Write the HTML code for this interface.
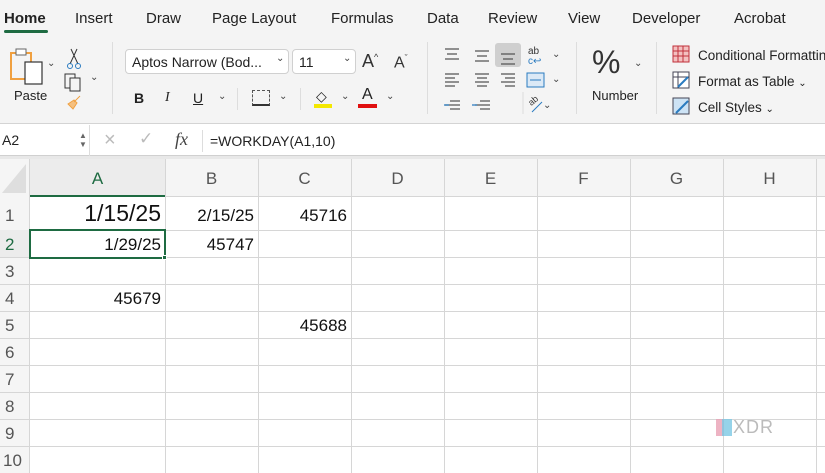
<!DOCTYPE html>
<html><head><meta charset="utf-8"><style>
*{margin:0;padding:0;box-sizing:border-box}
body{width:825px;height:473px;overflow:hidden;background:#fff;font-family:"Liberation Sans",sans-serif;color:#222;position:relative}
.a{position:absolute}
.tab{position:absolute;top:10px;font-size:15px;color:#222}
.t{position:absolute;font-size:13px;color:#222;white-space:nowrap}
.chev{position:absolute;font-size:10px;color:#444}
.rn{position:absolute;left:0;width:30px;font-size:17px;color:#555;padding-left:5px}
.ch{position:absolute;top:160px;height:37px;line-height:37px;text-align:center;font-size:17px;color:#555}
.cell{position:absolute;font-size:17px;color:#111;text-align:right}
</style></head><body>
<div class="a" style="left:0;top:0;width:825px;height:124px;background:#f4f4f4;border-bottom:1px solid #d4d4d4"></div>
<div class="tab" style="left:4px;font-weight:bold">Home</div>
<div class="a" style="left:4px;top:30px;width:44px;height:3px;background:#1e6b42;border-radius:2px"></div>
<div class="tab" style="left:75px">Insert</div>
<div class="tab" style="left:146px">Draw</div>
<div class="tab" style="left:212px">Page Layout</div>
<div class="tab" style="left:331px">Formulas</div>
<div class="tab" style="left:427px">Data</div>
<div class="tab" style="left:488px">Review</div>
<div class="tab" style="left:568px">View</div>
<div class="tab" style="left:632px">Developer</div>
<div class="tab" style="left:734px">Acrobat</div>

<svg class="a" style="left:8px;top:46px" width="110" height="70">
<rect x="3" y="7" width="20" height="26" fill="none" stroke="#f0a040" stroke-width="2"/>
<rect x="8" y="3" width="10" height="6" fill="#fff" stroke="#666"/>
<rect x="17" y="16" width="17" height="22" fill="#fff" stroke="#333" stroke-width="1.2"/>
<path d="M63 3 L70 18 M69 3 L62 18" stroke="#333" fill="none"/>
<circle cx="62" cy="20" r="2.5" stroke="#2a7bc0" fill="none"/><circle cx="70" cy="20" r="2.5" stroke="#2a7bc0" fill="none"/>
<rect x="57" y="28" width="10" height="14" fill="none" stroke="#333"/><rect x="62" y="32" width="10" height="13" fill="#f4f4f4" stroke="#333"/>
<path d="M72 50 l-6 6 M60 58 l6 -4 l3 3 l-4 6 z" stroke="#f0a040" fill="#f5c080"/>
</svg>
<div class="chev" style="left:47px;top:58px">⌄</div>
<div class="chev" style="left:90px;top:72px">⌄</div>
<div class="t" style="left:14px;top:88px">Paste</div>
<div class="a" style="left:112px;top:42px;width:1px;height:72px;background:#ddd"></div>

<div class="a" style="left:125px;top:49px;width:164px;height:25px;background:#fff;border:1px solid #d0d0d0;border-radius:4px"></div>
<div class="t" style="left:132px;top:54px;font-size:14px">Aptos Narrow (Bod...</div>
<div class="chev" style="left:276px;top:53px">⌄</div>
<div class="a" style="left:292px;top:49px;width:64px;height:25px;background:#fff;border:1px solid #d0d0d0;border-radius:4px"></div>
<div class="t" style="left:299px;top:54px;font-size:14px">11</div>
<div class="chev" style="left:343px;top:53px">⌄</div>
<div class="t" style="left:362px;top:51px;font-size:18px;color:#333">A<sup style="font-size:9px">^</sup></div>
<div class="t" style="left:394px;top:53px;font-size:16px;color:#333">A<sup style="font-size:9px">ˇ</sup></div>
<div class="t" style="left:134px;top:90px;font-weight:bold;font-size:14px">B</div>
<div class="t" style="left:165px;top:90px;font-style:italic;font-size:14px;font-family:'Liberation Serif'">I</div>
<div class="t" style="left:193px;top:90px;text-decoration:underline;font-size:14px">U</div>
<div class="chev" style="left:218px;top:91px">⌄</div>
<div class="a" style="left:237px;top:88px;width:1px;height:22px;background:#ddd"></div>
<div class="a" style="left:252px;top:90px;width:18px;height:16px;border:1px dashed #555;border-bottom:2px solid #333"></div>
<div class="chev" style="left:279px;top:91px">⌄</div>
<div class="a" style="left:300px;top:88px;width:1px;height:22px;background:#ddd"></div>
<div class="t" style="left:316px;top:88px;font-size:14px">◇</div>
<div class="a" style="left:314px;top:104px;width:18px;height:4px;background:#f4e800"></div>
<div class="chev" style="left:341px;top:91px">⌄</div>
<div class="t" style="left:362px;top:86px;font-size:16px">A</div>
<div class="a" style="left:358px;top:104px;width:19px;height:4px;background:#e01010"></div>
<div class="chev" style="left:386px;top:91px">⌄</div>
<div class="a" style="left:427px;top:42px;width:1px;height:72px;background:#ddd"></div>

<svg class="a" style="left:440px;top:42px" width="130" height="76">
<rect x="55" y="1" width="26" height="24" rx="3" fill="#cfcfcf"/>
<g stroke="#555" stroke-width="1.3">
<path d="M5 7h14M7 12h10M5 17h14"/><path d="M35 9h14M37 14h10M35 19h14"/><path d="M61 12h14M63 17h10M61 22h14"/>
<path d="M5 32h14M5 36h10M5 40h14M5 44h10"/><path d="M35 32h14M37 36h10M35 40h14M37 44h10"/><path d="M61 32h14M65 36h10M61 40h14M65 44h10"/>
<path d="M10 59h10M5 63h15M10 67h10"/><path d="M40 59h10M35 63h15M40 67h10"/>
</g>
<path d="M4 63h5M32 63h5" stroke="#2a7bc0" stroke-width="1.3"/>
<rect x="87" y="31" width="17" height="14" fill="#dbe9f6" stroke="#2a7bc0"/>
<path d="M90 38h11" stroke="#2a7bc0"/>
<path d="M83 50v22" stroke="#ddd"/>
<path d="M92 70 l10 -10" stroke="#2a7bc0"/>
<text x="88" y="12" font-size="10" fill="#333" font-family="Liberation Sans">ab</text><text x="88" y="22" font-size="10" fill="#2a7bc0" font-family="Liberation Sans">c↩</text>
<text x="89" y="62" font-size="9" fill="#333" font-family="Liberation Sans" transform="rotate(-40 93 60)">ab</text>
</svg>
<div class="chev" style="left:552px;top:49px">⌄</div>
<div class="chev" style="left:552px;top:74px">⌄</div>
<div class="chev" style="left:543px;top:100px">⌄</div>
<div class="a" style="left:576px;top:42px;width:1px;height:72px;background:#ddd"></div>
<div class="t" style="left:592px;top:44px;font-size:32px;color:#333;font-weight:300">%</div>
<div class="chev" style="left:634px;top:58px">⌄</div>
<div class="t" style="left:592px;top:88px">Number</div>
<div class="a" style="left:656px;top:42px;width:1px;height:72px;background:#ddd"></div>
<svg class="a" style="left:672px;top:45px" width="20" height="72">
<rect x="1" y="1" width="16" height="16" fill="#f3c0c0" stroke="#c0303a"/><path d="M1 6h16M1 11h16M6 1v16M11 1v16" stroke="#c0303a"/>
<rect x="1" y="27" width="16" height="16" fill="#fff" stroke="#445"/><path d="M1 32h16M6 27v16" stroke="#445"/><path d="M6 42l10-10" stroke="#2a7bc0" stroke-width="2"/>
<rect x="1" y="53" width="16" height="16" fill="#cde3f5" stroke="#445"/><path d="M4 68l12-12" stroke="#2a7bc0" stroke-width="2"/>
</svg>
<div class="t" style="left:698px;top:48px;font-size:13.5px">Conditional Formatting</div>
<div class="t" style="left:698px;top:74px;font-size:13.5px">Format as Table <span style="font-size:10px">⌄</span></div>
<div class="t" style="left:698px;top:100px;font-size:13.5px">Cell Styles <span style="font-size:10px">⌄</span></div>

<div class="a" style="left:0;top:125px;width:825px;height:31px;background:#fff;border-bottom:1px solid #d0d0d0"></div>
<div class="a" style="left:89px;top:125px;width:1px;height:31px;background:#ddd"></div>
<div class="t" style="left:2px;top:132px;font-size:14px">A2</div>
<div class="a" style="left:79px;top:131px;font-size:8px;color:#666;line-height:9px">▲<br>▼</div>
<div class="t" style="left:104px;top:129px;font-size:20px;color:#bbb">×</div>
<div class="t" style="left:139px;top:129px;font-size:17px;color:#bbb">✓</div>
<div class="t" style="left:175px;top:129px;font-size:18px;font-style:italic;font-family:'Liberation Serif';color:#444">fx</div>
<div class="a" style="left:202px;top:130px;width:1px;height:22px;background:#ddd"></div>
<div class="t" style="left:210px;top:133px;font-size:14px">=WORKDAY(A1,10)</div>
<div class="a" style="left:0;top:156px;width:825px;height:3px;background:#e8e8e8"></div>

<div class="a" style="left:0;top:159px;width:825px;height:38px;background:#f5f5f5;border-bottom:1px solid #d6d6d6"></div>
<div class="a" style="left:0;top:159px;width:30px;height:314px;background:#f5f5f5;border-right:1px solid #d6d6d6"></div>
<svg class="a" style="left:0;top:160px" width="30" height="37"><path d="M26 4 L26 33 L2 33 Z" fill="#dedede"/></svg>
<div class="a" style="left:30px;top:159px;width:135px;height:38px;background:#ececec;border-bottom:2px solid #1e6b42"></div>
<div class="ch" style="left:30px;width:135px;color:#1e6b42">A</div>
<div class="ch" style="left:165px;width:93px">B</div>
<div class="ch" style="left:258px;width:93px">C</div>
<div class="ch" style="left:351px;width:93px">D</div>
<div class="ch" style="left:444px;width:93px">E</div>
<div class="ch" style="left:537px;width:93px">F</div>
<div class="ch" style="left:630px;width:93px">G</div>
<div class="ch" style="left:723px;width:93px">H</div>
<svg class="a" style="left:0;top:159px" width="825" height="314">
<g stroke="#d6d6d6" stroke-width="1">
<path d="M165.5 0v314M258.5 0v314M351.5 0v314M444.5 0v314M537.5 0v314M630.5 0v314M723.5 0v314M816.5 0v314"/>
<path d="M0 71.5h825M0 98.5h825M0 125.5h825M0 152.5h825M0 179.5h825M0 206.5h825M0 233.5h825M0 260.5h825M0 287.5h825"/>
</g>
</svg>
<div class="a" style="left:0;top:230px;width:30px;height:27px;background:#ececec"></div>
<div class="rn" style="top:206px">1</div>
<div class="rn" style="top:235px;color:#1e6b42">2</div>
<div class="rn" style="top:262px">3</div>
<div class="rn" style="top:289px">4</div>
<div class="rn" style="top:316px">5</div>
<div class="rn" style="top:343px">6</div>
<div class="rn" style="top:370px">7</div>
<div class="rn" style="top:397px">8</div>
<div class="rn" style="top:424px">9</div>
<div class="rn" style="top:451px;padding-left:3px">10</div>

<div class="cell" style="left:30px;width:131px;top:200px;font-size:23px">1/15/25</div>
<div class="cell" style="left:165px;width:89px;top:206px">2/15/25</div>
<div class="cell" style="left:258px;width:89px;top:206px">45716</div>
<div class="a" style="left:29px;top:229px;width:137px;height:30px;border:2px solid #1e6b42"></div>
<div class="a" style="left:162px;top:255px;width:5px;height:5px;background:#1e6b42;border:1px solid #fff"></div>
<div class="cell" style="left:30px;width:131px;top:235px">1/29/25</div>
<div class="cell" style="left:165px;width:89px;top:235px">45747</div>
<div class="cell" style="left:30px;width:131px;top:289px">45679</div>
<div class="cell" style="left:258px;width:89px;top:316px">45688</div>

<div class="a" style="left:716px;top:419px;width:8px;height:17px;background:#e8a0b4;opacity:.8"></div>
<div class="a" style="left:722px;top:419px;width:10px;height:17px;background:#7cc8e4;opacity:.8"></div>
<div class="t" style="left:733px;top:417px;font-size:18px;color:#bbb;letter-spacing:1px">XDR</div>
</body></html>
